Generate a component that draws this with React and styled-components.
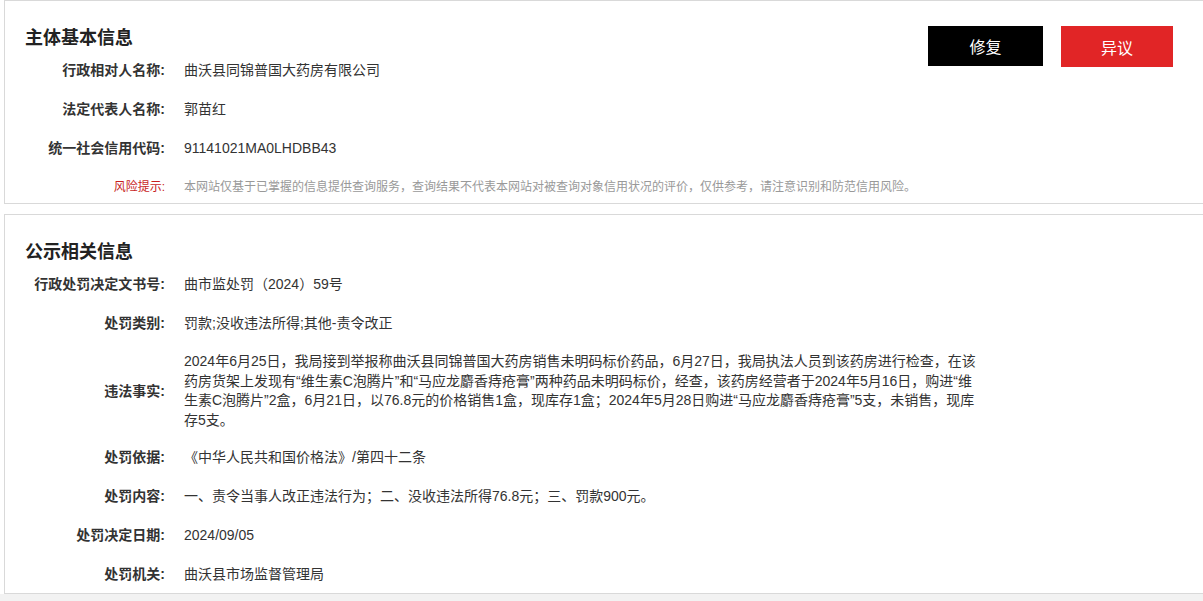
import React from "react";
import styled, { createGlobalStyle } from "styled-components";

const GlobalStyle = createGlobalStyle`
  html, body {
    margin: 0;
    padding: 0;
    overflow: hidden;
    background: #f2f2f2;
  }
  body {
    font-family: "Liberation Sans", "Noto Sans CJK SC", sans-serif;
    color: #333;
  }
`;

const Page = styled.div`
  width: 1220px;
  background: #fff;
  padding-left: 4px;
  box-sizing: border-box;
  display: flex;
  flex-direction: column;
  gap: 10px;
`;

const Card = styled.section`
  border: 1px solid #d9d9d9;
  background: #fff;
  display: flex;
  align-items: flex-start;
`;

const InfoColumn = styled.div`
  flex: 1;
  padding: 24px 0 0 20px;
  display: flex;
  flex-direction: column;
`;

const Title = styled.h2`
  margin: 0;
  font-size: 18px;
  line-height: 26px;
  font-weight: bold;
  color: #222;
`;

const Row = styled.div`
  display: flex;
  align-items: center;
  padding: 9px 0 ${(p) => (p.$multi ? "8px" : "10px")};
  &:last-child {
    padding-bottom: ${(p) => (p.$risk ? "6px" : "9px")};
  }
`;

const Label = styled.div`
  width: 140px;
  flex-shrink: 0;
  text-align: right;
  font-size: ${(p) => (p.$risk ? "12px" : "14px")};
  font-weight: ${(p) => (p.$risk ? "normal" : "bold")};
  color: ${(p) => (p.$risk ? "#c81e1e" : "#333")};
  line-height: 20px;
`;

const Value = styled.div`
  margin-left: 19px;
  max-width: 797px;
  font-size: ${(p) => (p.$risk ? "12px" : "14px")};
  color: ${(p) => (p.$risk ? "#999" : "#333")};
  line-height: ${(p) => (p.$multi ? "19.5px" : "20px")};
`;

const ButtonGroup = styled.div`
  display: flex;
  gap: 18px;
  margin: 25px 46px 0 0;
`;

const ActionButton = styled.button`
  width: ${(p) => (p.$danger ? "112px" : "115px")};
  height: ${(p) => (p.$danger ? "41px" : "40px")};
  border: none;
  background: ${(p) => (p.$danger ? "#e12526" : "#000")};
  color: #fff;
  font-family: "Liberation Sans", "Noto Sans CJK SC", sans-serif;
  font-size: 16px;
  cursor: pointer;
  padding: 0;
`;

const basicInfo = [
  ["行政相对人名称:", "曲沃县同锦普国大药房有限公司"],
  ["法定代表人名称:", "郭苗红"],
  ["统一社会信用代码:", "91141021MA0LHDBB43"],
];

const publicInfo = [
  ["行政处罚决定文书号:", "曲市监处罚（2024）59号"],
  ["处罚类别:", "罚款;没收违法所得;其他-责令改正"],
  [
    "违法事实:",
    "2024年6月25日，我局接到举报称曲沃县同锦普国大药房销售未明码标价药品，6月27日，我局执法人员到该药房进行检查，在该药房货架上发现有“维生素C泡腾片”和“马应龙麝香痔疮膏”两种药品未明码标价，经查，该药房经营者于2024年5月16日，购进“维生素C泡腾片”2盒，6月21日，以76.8元的价格销售1盒，现库存1盒；2024年5月28日购进“马应龙麝香痔疮膏”5支，未销售，现库存5支。",
    true,
  ],
  ["处罚依据:", "《中华人民共和国价格法》/第四十二条"],
  ["处罚内容:", "一、责令当事人改正违法行为；二、没收违法所得76.8元；三、罚款900元。"],
  ["处罚决定日期:", "2024/09/05"],
  ["处罚机关:", "曲沃县市场监督管理局"],
];

export default function App() {
  return (
    <>
      <GlobalStyle />
      <Page>
        <Card>
          <InfoColumn>
            <Title>主体基本信息</Title>
            {basicInfo.map(([l, v]) => (
              <Row key={l}>
                <Label>{l}</Label>
                <Value>{v}</Value>
              </Row>
            ))}
            <Row $risk>
              <Label $risk>风险提示:</Label>
              <Value $risk>
                本网站仅基于已掌握的信息提供查询服务，查询结果不代表本网站对被查询对象信用状况的评价，仅供参考，请注意识别和防范信用风险。
              </Value>
            </Row>
          </InfoColumn>
          <ButtonGroup>
            <ActionButton>修复</ActionButton>
            <ActionButton $danger>异议</ActionButton>
          </ButtonGroup>
        </Card>
        <Card>
          <InfoColumn>
            <Title>公示相关信息</Title>
            {publicInfo.map(([l, v, multi]) => (
              <Row key={l} $multi={multi}>
                <Label>{l}</Label>
                <Value $multi={multi}>{v}</Value>
              </Row>
            ))}
          </InfoColumn>
        </Card>
      </Page>
    </>
  );
}
